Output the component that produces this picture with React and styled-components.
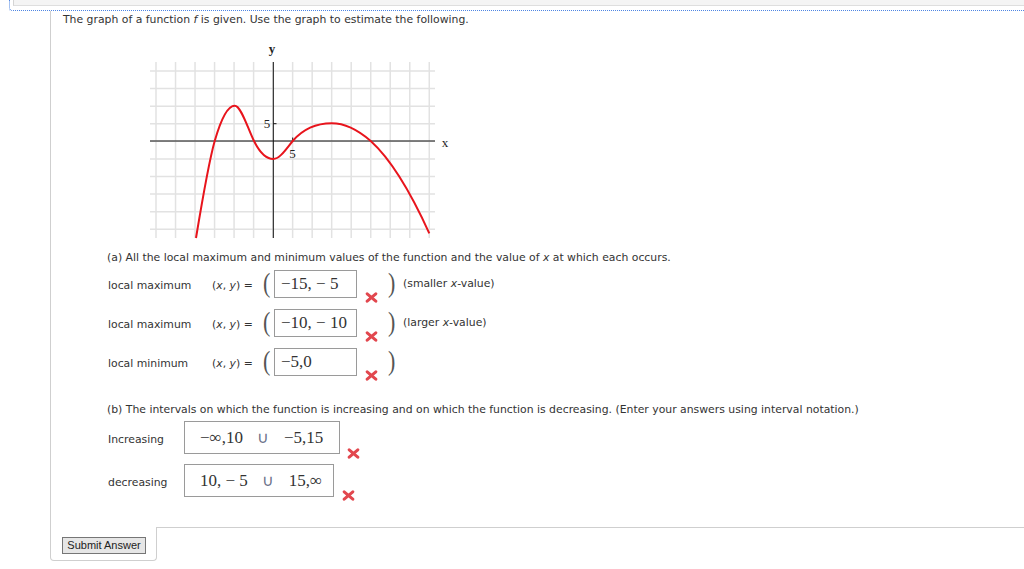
import React from 'react';
import styled, { createGlobalStyle } from 'styled-components';

const GlobalStyle = createGlobalStyle`
  html, body {
    margin: 0;
    padding: 0;
    background: #fff;
  }
  body {
    font-family: "DejaVu Sans", Verdana, sans-serif;
    font-size: 10.85px;
    color: #333;
  }
`;

const FocusFrame = styled.div`
  margin-left: 9px;
  height: 10px;
  border-left: 1px dotted #4f86e3;
  border-bottom: 1px dotted #4f86e3;
  border-bottom-left-radius: 3px;
`;

const Strip = styled.div`
  margin-left: 3px;
  height: 5px;
  background: #f4f4f4;
  border-left: 1px solid #d4d4d4;
  border-bottom: 1px solid #dedede;
`;

const Panel = styled.div`
  margin-left: 50px;
  height: 516px;
  box-sizing: border-box;
  border-left: 1px solid #cfcfcf;
  padding: 2px 0 0 12px;
`;

const Heading = styled.p`
  margin: 0;
  line-height: 14px;
`;

const Graph = styled.svg`
  display: block;
  margin: 13px 0 0 77px;
`;

const Question = styled.div`
  margin: 6px 0 0 44px;
`;

const Prompt = styled.p`
  margin: ${({ $top }) => $top || 0}px 0 0;
  line-height: 14px;
`;

const Rows = styled.div`
  display: flex;
  flex-direction: column;
  gap: ${({ $gap }) => $gap}px;
  margin-top: ${({ $top }) => $top}px;
`;

const Row = styled.div`
  display: flex;
  align-items: flex-start;
  height: ${({ $h }) => $h}px;
`;

const Label = styled.span`
  width: ${({ $w }) => $w}px;
  padding-left: 1px;
  line-height: ${({ $h }) => $h + 4}px;
  flex-shrink: 0;
`;

const Coords = styled.span`
  width: 51px;
  line-height: 31px;
  flex-shrink: 0;
`;

const Paren = styled.span`
  width: ${({ $w }) => $w}px;
  flex-shrink: 0;
  font-family: "Liberation Serif", serif;
  font-size: 22px;
  line-height: 28px;
  color: #555;
  transform: scaleY(1.25);
  transform-origin: 50% 55%;
`;

const AnswerBox = styled.div`
  width: ${({ $w }) => $w}px;
  height: ${({ $h }) => $h}px;
  box-sizing: border-box;
  flex-shrink: 0;
  border: 1px solid #9a9a9a;
  padding-left: ${({ $pad }) => $pad}px;
  font-family: "Liberation Serif", serif;
  font-size: 17px;
  line-height: ${({ $h }) => $h - 2}px;
  color: #333;
  white-space: pre;
`;

const Cup = styled.span`
  color: #6a7088;
  font-size: 16px;
  margin: 0 ${({ $r }) => $r}px 0 ${({ $l }) => $l}px;
`;

const Wrong = styled.svg`
  flex-shrink: 0;
  margin: ${({ $top }) => $top}px 0 0 ${({ $left }) => $left}px;
`;

const Note = styled.span`
  line-height: 28px;
  margin-left: 1px;
`;

const FooterRow = styled.div`
  display: flex;
  margin-left: 50px;
`;

const Tab = styled.div`
  width: 107px;
  height: 34px;
  box-sizing: border-box;
  border: 1px solid #cfcfcf;
  border-top: none;
  border-radius: 0 0 4px 4px;
  padding: 10px 0 0 11px;
`;

const Filler = styled.div`
  flex: 1;
  border-top: 1px solid #cfcfcf;
`;

const SubmitButton = styled.button`
  display: block;
  width: 84px;
  height: 17px;
  padding: 0;
  border: 1px solid #767676;
  background: #e6e6e6;
  color: #222;
  font-family: "Liberation Sans", Arial, sans-serif;
  font-size: 11px;
  line-height: 15px;
`;

const WrongMark = ({ top, left }) => (
  <Wrong width="13" height="11" viewBox="0 0 13 11" $top={top} $left={left}>
    <path d="M2.2 1.8 L10.8 9.2 M10.8 1.8 L2.2 9.2" stroke="#e2474e" strokeWidth="3" strokeLinecap="round" />
  </Wrong>
);

const gridX = Array.from({ length: 15 }, (_, i) => 156 + i * 19.52);
const gridY = Array.from({ length: 10 }, (_, j) => 71 + j * 17.58);

const curve =
  'M196 238 C202.2 200.6 208.5 162.8 214.7 141 ' +
  'C221.4 117.7 228 105.7 234.7 105.7 ' +
  'C241.1 105.7 247.6 128.1 254 141 ' +
  'C260.4 153.9 266.9 159 273.3 159 ' +
  'C279.8 159 286.2 148.8 292.7 141 ' +
  'C304 128 318 123.3 331.7 123.3 ' +
  'C346 123.3 358 130 370.7 141 ' +
  'C390.2 158.6 409.8 190.4 429.3 233.3';

const FunctionGraph = () => (
  <Graph width="320" height="205" viewBox="140 40 320 205">
    {gridX.map((x) => (
      <line key={`v${x}`} x1={x} y1="62" x2={x} y2="238" stroke="#e2e2e2" strokeWidth="1.5" />
    ))}
    {gridY.map((y) => (
      <line key={`h${y}`} x1="150" y1={y} x2="435" y2={y} stroke="#e2e2e2" strokeWidth="1.5" />
    ))}
    <line x1="273.3" y1="62" x2="273.3" y2="238" stroke="#111" strokeWidth="1" />
    <line x1="150" y1="141" x2="435" y2="141" stroke="#111" strokeWidth="1" />
    <line x1="273.3" y1="123.7" x2="276.5" y2="123.7" stroke="#111" strokeWidth="1" />
    <line x1="292.7" y1="137.5" x2="292.7" y2="141" stroke="#111" strokeWidth="1" />
    <g fontFamily="Liberation Serif, serif" fontSize="13" fill="#222">
      <text x="272" y="53" textAnchor="middle" fontWeight="bold">y</text>
      <text x="445" y="147" textAnchor="middle">x</text>
      <text x="267" y="128" textAnchor="middle">5</text>
      <text x="292.5" y="158" textAnchor="middle">5</text>
    </g>
    <path d={curve} fill="none" stroke="#e8141c" strokeWidth="2" />
  </Graph>
);

const extrema = [
  { label: 'local maximum', value: '−15, − 5', note: 'smaller' },
  { label: 'local maximum', value: '−10, − 10', note: 'larger' },
  { label: 'local minimum', value: '−5,0', note: null },
];

const intervals = [
  { label: 'Increasing', left: '−∞,10', right: '−5,15', width: 156, mark: { top: 28, left: 7 } },
  { label: 'decreasing', left: '10, − 5', right: '15,∞', width: 150, mark: { top: 27, left: 8 } },
];

export default function App() {
  return (
    <>
      <GlobalStyle />
      <FocusFrame>
        <Strip />
      </FocusFrame>
      <Panel>
        <Heading>
          The graph of a function <i>f</i> is given. Use the graph to estimate the following.
        </Heading>
        <FunctionGraph />
        <Question>
          <Prompt>
            (a) All the local maximum and minimum values of the function and the value of <i>x</i> at which each occurs.
          </Prompt>
          <Rows $gap={11} $top={5}>
            {extrema.map((row, i) => (
              <Row key={i} $h={28}>
                <Label $w={104} $h={28}>{row.label}</Label>
                <Coords>
                  (<i>x</i>, <i>y</i>) =
                </Coords>
                <Paren $w={11}>(</Paren>
                <AnswerBox $w={83} $h={28} $pad={6}>{row.value}</AnswerBox>
                <WrongMark top={22} left={8} />
                <Paren $w={14} style={{ marginLeft: 10 }}>)</Paren>
                {row.note && (
                  <Note>
                    ({row.note} <i>x</i>-value)
                  </Note>
                )}
              </Row>
            ))}
          </Rows>
          <Prompt $top={27}>
            (b) The intervals on which the function is increasing and on which the function is decreasing. (Enter your answers using interval notation.)
          </Prompt>
          <Rows $gap={10} $top={4}>
            {intervals.map((row) => (
              <Row key={row.label} $h={33}>
                <Label $w={76} $h={33}>{row.label}</Label>
                <AnswerBox $w={row.width} $h={33} $pad={15}>
                  {row.left}
                  <Cup $l={14} $r={15}>∪</Cup>
                  {row.right}
                </AnswerBox>
                <WrongMark top={row.mark.top - 1} left={row.mark.left} />
              </Row>
            ))}
          </Rows>
        </Question>
      </Panel>
      <FooterRow>
        <Tab>
          <SubmitButton>Submit Answer</SubmitButton>
        </Tab>
        <Filler />
      </FooterRow>
    </>
  );
}
